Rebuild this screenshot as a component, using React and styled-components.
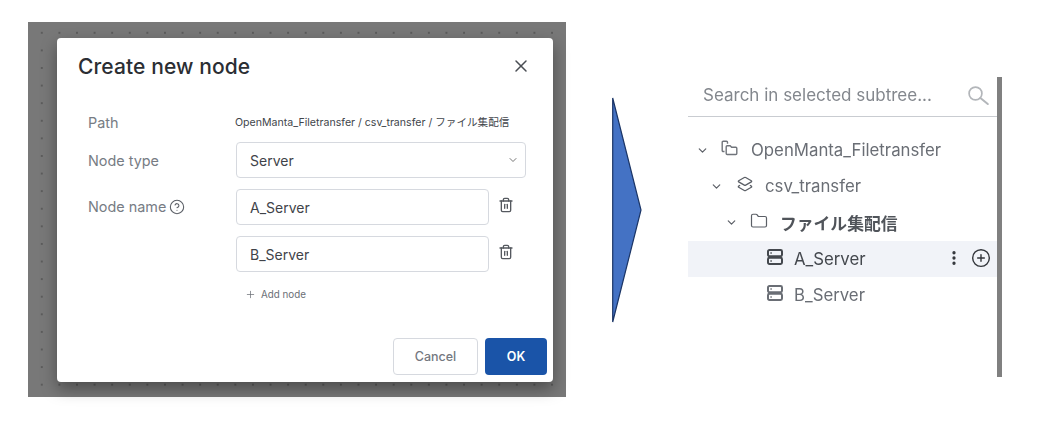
import React from "react";
import styled, { createGlobalStyle } from "styled-components";
import { ChevronDown, X, Trash2, Plus, CirclePlus, EllipsisVertical, Folder, Layers2, CircleHelp } from "lucide-react";

const Global = createGlobalStyle`
  html, body { margin: 0; padding: 0; background: #fff; }
  body { font-family: Inter, "Noto Sans CJK JP", sans-serif; }
`;

const Page = styled.div`
  width: 1040px;
  height: 437px;
  display: flex;
  align-items: flex-start;
  overflow: hidden;
  filter: blur(0.35px);
`;

const Backdrop = styled.div`
  width: 538px;
  height: 375px;
  margin: 22px 0 0 28px;
  padding: 16px 13px 15px 29px;
  box-sizing: border-box;
  background-color: #787878;
  background-image: radial-gradient(circle, #5c5c5c 0.8px, transparent 1.1px);
  background-size: 17.6px 17.6px;
  background-position: 5px 2px;
`;

const Dialog = styled.div`
  width: 496px;
  height: 344px;
  background: #fff;
  border-radius: 4px;
  box-shadow: 0 7px 16px rgba(0, 0, 0, 0.36);
  display: flex;
  flex-direction: column;
`;

const DialogHead = styled.div`
  display: flex;
  align-items: center;
  justify-content: space-between;
  padding: 14px 22px 0 21px;
  height: 28px;
  color: #2b2e33;
`;

const Title = styled.div`
  font-size: 21px;
  font-weight: 500;
  letter-spacing: 0.1px;
`;

const Form = styled.div`
  margin: 31px 0 0 31px;
  display: grid;
  grid-template-columns: 148px 290px;
  row-gap: 11px;
  align-items: center;
`;

const Label = styled.div`
  font-size: 14.4px;
  color: #777c84;
  display: flex;
  align-items: center;
  gap: 3px;
  align-self: ${(p) => (p.$top ? "start" : "center")};
  margin-top: ${(p) => p.$offset || 0}px;
`;

const PathText = styled.div`
  font-size: 10.6px;
  color: #41454b;
  white-space: nowrap;
  height: 20px;
  line-height: 24px;
  margin-left: -1px;
`;

const Field = styled.div`
  height: 36px;
  box-sizing: border-box;
  width: ${(p) => (p.$short ? "253px" : "290px")};
  border: 1px solid #d6d9df;
  border-radius: 4px;
  display: flex;
  align-items: center;
  justify-content: space-between;
  padding: 0 6px 0 13px;
  font-size: 14px;
  color: #3f4349;
`;

const NameList = styled.div`
  display: flex;
  flex-direction: column;
  gap: 11px;
`;

const NameRow = styled.div`
  display: flex;
  align-items: center;
  gap: 9px;
  color: #55595f;
`;

const TrashIcon = styled(Trash2)`
  margin-bottom: 4px;
`;

const AddNode = styled.div`
  display: flex;
  align-items: center;
  gap: 5px;
  font-size: 9.8px;
  color: #6b6f76;
  margin: 6px 0 0 9px;
`;

const Actions = styled.div`
  margin-top: auto;
  padding: 0 6px 7px 0;
  display: flex;
  justify-content: flex-end;
  gap: 7px;
`;

const Button = styled.div`
  height: 37px;
  width: ${(p) => (p.$primary ? "62px" : "85px")};
  box-sizing: border-box;
  border-radius: 4px;
  display: flex;
  align-items: center;
  justify-content: center;
  font-size: 12.5px;
  font-weight: ${(p) => (p.$primary ? 600 : 500)};
  color: ${(p) => (p.$primary ? "#fff" : "#74787f")};
  background: ${(p) => (p.$primary ? "#1a54a8" : "#fff")};
  border: ${(p) => (p.$primary ? "none" : "1px solid #d6d9df")};
`;

const Arrow = styled.svg`
  margin: 97px 0 0 46px;
  flex: none;
`;

const Panel = styled.div`
  width: 314px;
  height: 300px;
  margin: 77px 0 0 46px;
  border-right: 5px solid #808080;
  box-sizing: border-box;
`;

const SearchBar = styled.div`
  height: 35px;
  padding: 0 7px 4px 15px;
  border-bottom: 1px solid #c9ccd1;
  display: flex;
  align-items: center;
  justify-content: space-between;
  font-size: 17px;
  color: #83878d;
`;

const Tree = styled.div`
  padding-top: 15px;
`;

const TreeRow = styled.div`
  height: 36.3px;
  display: flex;
  align-items: center;
  padding-left: ${(p) => p.$indent}px;
  gap: ${(p) => p.$gap || 12}px;
  background: ${(p) => (p.$active ? "#f1f3f8" : "transparent")};
  font-size: 16.8px;
  font-weight: ${(p) => (p.$bold ? 700 : 400)};
  color: ${(p) => (p.$bold ? "#50545a" : p.$active ? "#44484e" : "#6a6e75")};
`;

const Name = styled.span`
  margin-left: ${(p) => p.$left || 0}px;
`;

const Raised = styled.span`
  display: flex;
  margin-bottom: 4px;
  margin-left: ${(p) => p.$left || 0}px;
`;

const RowTools = styled.div`
  margin-left: auto;
  padding-right: 6px;
  display: flex;
  align-items: center;
  gap: 8px;
  color: #33363b;
  margin-bottom: 2px;
`;

const SearchIcon = () => (
  <svg width="22" height="22" viewBox="0 0 22 22" fill="none" stroke="#b3b6ba" strokeWidth="1.7" strokeLinecap="round">
    <circle cx="7.5" cy="9.5" r="6.4" />
    <path d="M12.4 14l7.4 6" strokeWidth="2" />
  </svg>
);

const ServerIcon = ({ color }) => (
  <svg width="16" height="16" viewBox="0 0 16 16" fill="none" stroke={color} strokeWidth="2">
    <rect x="1" y="1" width="14" height="6.2" rx="1.4" />
    <rect x="1" y="8.8" width="14" height="6.2" rx="1.4" />
    <path d="M3.4 4h1.4M3.4 12h1.4" strokeWidth="1.4" />
  </svg>
);

const RootIcon = () => (
  <svg width="17" height="17" viewBox="0 0 17 17" fill="none" stroke="#70747b" strokeWidth="1.4" strokeLinejoin="round">
    <path d="M3.5 11.5H2.2a1 1 0 0 1-1-1V2.2a1 1 0 0 1 1-1h3.3a1 1 0 0 1 1 1v1.6" />
    <path d="M5.2 6.8a1 1 0 0 1 1-1h3l1.4 1.5h4.2a1 1 0 0 1 1 1v5.2a1 1 0 0 1-1 1H6.2a1 1 0 0 1-1-1z" />
  </svg>
);

const App = () => (
  <Page>
    <Global />
    <Backdrop>
      <Dialog>
        <DialogHead>
          <Title>Create new node</Title>
          <X size={20} strokeWidth={1.8} color="#4a4e54" />
        </DialogHead>
        <Form>
          <Label $offset={2}>Path</Label>
          <PathText>OpenManta_Filetransfer / csv_transfer / ファイル集配信</PathText>
          <Label>Node type</Label>
          <Field>
            Server
            <ChevronDown size={12} strokeWidth={1.8} color="#666" />
          </Field>
          <Label $top $offset={9}>
            Node name
            <CircleHelp size={16} strokeWidth={1.6} color="#5b5f66" />
          </Label>
          <NameList>
            <NameRow>
              <Field $short>A_Server</Field>
              <TrashIcon size={16} strokeWidth={2} />
            </NameRow>
            <NameRow>
              <Field $short>B_Server</Field>
              <TrashIcon size={16} strokeWidth={2} />
            </NameRow>
            <AddNode>
              <Plus size={11} strokeWidth={1.6} />
              Add node
            </AddNode>
          </NameList>
        </Form>
        <Actions>
          <Button>Cancel</Button>
          <Button $primary>OK</Button>
        </Actions>
      </Dialog>
    </Backdrop>
    <Arrow width="30" height="227" viewBox="0 0 30 227">
      <polygon points="0.7,1 29,113 0.7,225" fill="#4472c4" stroke="#1b3566" strokeWidth="1.2" />
    </Arrow>
    <Panel>
      <SearchBar>
        Search in selected subtree...
        <SearchIcon />
      </SearchBar>
      <Tree>
        <TreeRow $indent={8}>
          <ChevronDown size={13} strokeWidth={2.2} color="#5b5f66" />
          <Raised>
            <RootIcon />
          </Raised>
          <Name $left={1}>OpenManta_Filetransfer</Name>
        </TreeRow>
        <TreeRow $indent={22}>
          <ChevronDown size={13} strokeWidth={2.2} color="#5b5f66" />
          <Raised $left={2}>
            <Layers2 size={16} strokeWidth={1.9} color="#5b5f66" />
          </Raised>
          <Name>csv_transfer</Name>
        </TreeRow>
        <TreeRow $indent={37} $bold>
          <ChevronDown size={13} strokeWidth={2.2} color="#5b5f66" />
          <Raised>
            <Folder size={18} strokeWidth={1.6} color="#5b5f66" />
          </Raised>
          <Name>ファイル集配信</Name>
        </TreeRow>
        <TreeRow $indent={79} $active $gap={11}>
          <Raised>
            <ServerIcon color="#44484e" />
          </Raised>
          <Name>A_Server</Name>
          <RowTools>
            <EllipsisVertical size={18} strokeWidth={2.4} />
            <CirclePlus size={20} strokeWidth={1.7} />
          </RowTools>
        </TreeRow>
        <TreeRow $indent={79} $gap={11}>
          <Raised>
            <ServerIcon color="#6a6e75" />
          </Raised>
          <Name>B_Server</Name>
        </TreeRow>
      </Tree>
    </Panel>
  </Page>
);

export default App;
